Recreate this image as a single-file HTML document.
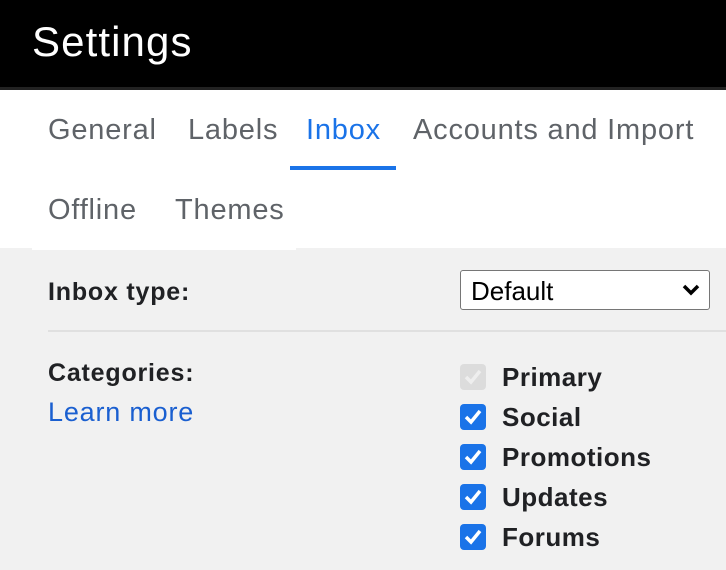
<!DOCTYPE html>
<html><head><style>
*{margin:0;padding:0;box-sizing:border-box}
body{width:726px;height:570px;overflow:hidden;background:#f1f1f1;font-family:"Liberation Sans",Arial,sans-serif;position:relative}
.hdr{position:absolute;left:0;top:0;width:726px;height:90px;background:#000;border-bottom:3px solid #222}
.hdr span{position:absolute;left:32px;top:18px;color:#fff;font-size:42px;letter-spacing:1.1px}
.tabs{position:absolute;left:0;top:90px;width:726px;height:158px;background:#fff}
.wb{position:absolute;left:32px;top:240px;width:264px;height:10px;background:#fff}
.t{position:absolute;font-size:29px;color:#5f6368;letter-spacing:0.8px;white-space:nowrap}
.ul{position:absolute;left:290px;top:166px;width:106px;height:4px;background:#1a73e8}
.b{position:absolute;font-weight:bold;font-size:25px;color:#202124;letter-spacing:0.8px}
.sel{position:absolute;left:460px;top:270px;width:250px;height:40px;border:1.5px solid #767676;border-radius:3px;background:#fff;font-size:26px;color:#000;padding:5px 10px}
.sep{position:absolute;left:48px;top:330px;width:678px;height:2px;background:#e0e0e0}
.cb{position:absolute;left:460px;width:26px;height:26px;border-radius:4px;background:#1a73e8}
.cb svg{position:absolute;left:0;top:0}
.cb.d{background:#dcdcdc}
.c{position:absolute;left:502px;font-weight:bold;font-size:26px;color:#202124;letter-spacing:0.5px}
</style></head><body>
<div class="hdr"><span>Settings</span></div>
<div class="tabs"></div>
<div class="wb"></div>
<div class="t" style="left:48px;top:114px">General</div>
<div class="t" style="left:188px;top:114px">Labels</div>
<div class="t" style="left:306px;top:114px;color:#1a73e8">Inbox</div>
<div class="t" style="left:413px;top:114px">Accounts and Import</div>
<div class="ul"></div>
<div class="t" style="left:48px;top:194px">Offline</div>
<div class="t" style="left:175px;top:194px">Themes</div>
<div class="b" style="left:48px;top:278px">Inbox type:</div>
<div class="sel">Default<svg style="position:absolute;right:9px;top:13px" width="18" height="12" viewBox="0 0 18 12"><path d="M2 2 L9 9 L16 2" stroke="#000" stroke-width="3.5" fill="none"/></svg></div>
<div class="sep"></div>
<div class="b" style="left:48px;top:359px">Categories:</div>
<div style="position:absolute;left:48px;top:397px;font-size:27px;color:#1a5fd0;letter-spacing:0.8px">Learn more</div>
<div class="cb d" style="top:364px"><svg width="26" height="26"><path d="M6 13 L11 18 L20 7" stroke="#eee" stroke-width="3.5" fill="none"/></svg></div>
<div class="cb" style="top:404px"><svg width="26" height="26"><path d="M6 13 L11 18 L20 7" stroke="#fff" stroke-width="3.5" fill="none"/></svg></div>
<div class="cb" style="top:444px"><svg width="26" height="26"><path d="M6 13 L11 18 L20 7" stroke="#fff" stroke-width="3.5" fill="none"/></svg></div>
<div class="cb" style="top:484px"><svg width="26" height="26"><path d="M6 13 L11 18 L20 7" stroke="#fff" stroke-width="3.5" fill="none"/></svg></div>
<div class="cb" style="top:524px"><svg width="26" height="26"><path d="M6 13 L11 18 L20 7" stroke="#fff" stroke-width="3.5" fill="none"/></svg></div>
<div class="c" style="top:362px">Primary</div>
<div class="c" style="top:402px">Social</div>
<div class="c" style="top:442px">Promotions</div>
<div class="c" style="top:482px">Updates</div>
<div class="c" style="top:522px">Forums</div>
</body></html>
